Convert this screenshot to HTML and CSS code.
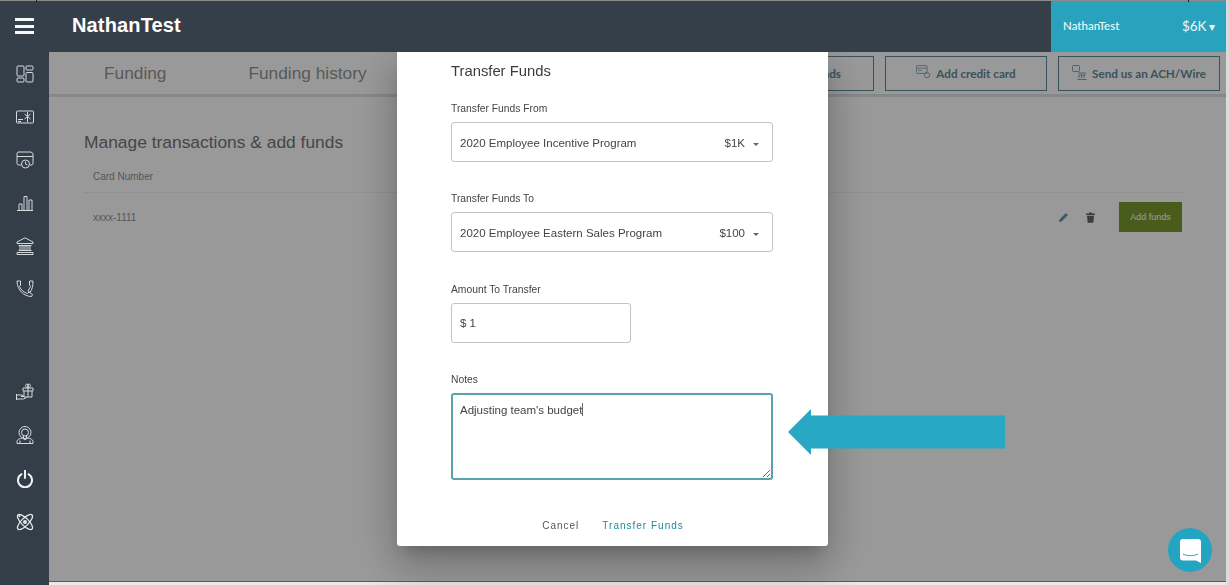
FILE: index.html
```html
<!DOCTYPE html>
<html lang="en">
<head>
<meta charset="utf-8">
<title>Transfer Funds</title>
<link rel="stylesheet" href="styles.css">
</head>
<body>
<div class="app">
  <header class="topbar">
    <div class="burger"><span></span><span></span><span></span></div>
    <h1 class="brand">NathanTest</h1>
    <div class="account"><span class="account-name">NathanTest</span><span class="account-bal">$6K <small>▾</small></span></div>
  </header>
  <div class="body-row">
    <nav class="sidebar">
      <div class="nav-group">
        <a class="nav-item"><svg class="ico" width="18" height="18" viewBox="0 0 18 18"><rect x="1" y="1" width="7" height="10" rx="1"/><rect x="10" y="1" width="7" height="4" rx="1"/><rect x="1" y="13" width="7" height="4" rx="1"/><rect x="10" y="7.5" width="7" height="9.5" rx="1"/></svg></a>
        <a class="nav-item"><svg class="ico" width="18" height="14" viewBox="0 0 18 14"><rect x=".5" y="1" width="17" height="12" rx="1"/><path d="M2 9.5h5M2 11.5h3M11.5 2v10M8.5 4l6 5M14.5 4l-6 5"/></svg></a>
        <a class="nav-item"><svg class="ico" width="18" height="18" viewBox="0 0 18 18"><path d="M5 14H2.500A1.500 1.500 0 0 1 1 12.500V2.500L2 1h13l2 1.500V12.500L16 14h-2M1 5.500h16"/><circle cx="9.500" cy="13" r="4"/><path d="M9.500 10.500V13l2 1"/></svg></a>
        <a class="nav-item"><svg class="ico" width="16" height="16" viewBox="0 0 16 16"><path d="M0 15.500h16M2 15V9h3v6M7 15V1.500h3V15M12 15V5h3v10"/></svg></a>
        <a class="nav-item"><svg class="ico" width="18" height="18" viewBox="0 0 18 18"><path d="M9 .8 17 5v1.500H1V5zM2.500 8.500h13M2.500 13.500h13M1 15.500h16v2H1zM4 8.500v5M6 8.500v5M8 8.500v5M10 8.500v5M12 8.500v5M14 8.500v5"/></svg></a>
        <a class="nav-item"><svg class="ico" width="18" height="17" viewBox="0 0 18 17"><path d="M1 1h3.500v4L3.500 6.500C5 10 8 12.500 11.500 13.500L13 12l3.500 2.500-1 2C8 16.500 1 10 1 1zM17 1h-3.500v4l1 1.500-2.500 4.500 2 1.500C16 10 17 6 17 1z"/></svg></a>
      </div>
      <div class="nav-group nav-lower">
        <a class="nav-item"><svg class="ico" width="18" height="17" viewBox="0 0 18 17"><path d="M7 5h10v3H7zM8 8v6h8V8M12 5v9M12 5c-3-.5-3-4-1-4s1 4 1 4c3-.500 3-4 1-4s-1 4-1 4M.500 11v6M.500 12H6l2 1.500H5M.500 16h7l3-1.500"/></svg></a>
        <a class="nav-item"><svg class="ico" width="18" height="18" viewBox="0 0 18 18"><circle cx="9" cy="6.500" r="6"/><circle cx="9" cy="6.500" r="3.500"/><path d="M1 17.500v-2c0-2 2.500-3 5.500-3.500L9 14l2.500-2c3 .500 5.500 1.500 5.500 3.500v2zM4 17.500v-3M14 17.500v-3M7.500 10v2M10.500 10v2"/></svg></a>
        <a class="nav-item"><svg class="ico ico-bold" width="16" height="18" viewBox="0 0 16 18"><path d="M4.500 4.200a7 7 0 1 0 7 0M8 .500V8"/></svg></a>
        <a class="nav-item"><svg class="ico ico-mid" width="18" height="18" viewBox="0 0 18 18"><ellipse cx="9" cy="9" rx="10" ry="3.700" transform="rotate(45 9 9)"/><ellipse cx="9" cy="9" rx="10" ry="3.700" transform="rotate(-45 9 9)"/><circle class="ico-fill" cx="9" cy="9" r="2"/><circle class="ico-fill" cx="3.500" cy="3" r="1"/></svg></a>
      </div>
    </nav>
    <main class="main">
      <div class="tabbar">
        <div class="tabs"><span class="tab">Funding</span><span class="tab">Funding history</span></div>
        <div class="actions">
          <button class="action action-cut">Transfer funds</button>
          <button class="action"><svg class="action-ico" width="15" height="15" viewBox="0 0 17 17"><rect x=".5" y=".5" width="12" height="9" rx="1"/><path d="M.5 3.500h12M2.500 6h4"/><circle cx="12.500" cy="11.500" r="3"/></svg>Add credit card</button>
          <button class="action"><svg class="action-ico" width="15" height="15" viewBox="0 0 15 15"><rect x=".5" y=".5" width="7" height="6" rx="1"/><path d="M6 8h8M6.500 10h7M7 10v3M9.500 10v3M12 10v3M5.500 14.500h9"/></svg>Send us an ACH/Wire</button>
        </div>
      </div>
      <section class="panel">
        <h2 class="panel-title">Manage transactions &amp; add funds</h2>
        <div class="table-head">Card Number</div>
        <div class="table-row">
          <span class="card-no">xxxx-1111</span>
          <span class="row-actions">
            <svg class="row-ico" width="10" height="10" viewBox="0 0 10 10"><path class="pencil" d="M0 10l.6-2.700L7 1l2 2-6.300 6.400z"/></svg>
            <svg class="row-ico" width="9" height="11" viewBox="0 0 9 11"><path class="trash" d="M0 1.500h3V.5h3v1h3v1.500H0zM1 3.800h7l-.7 7H1.700z"/></svg>
            <button class="add-funds">Add funds</button>
          </span>
        </div>
      </section>
    </main>
  </div>

  <div class="overlay">
    <div class="modal">
      <h3 class="modal-title">Transfer Funds</h3>
      <div class="field">
        <label class="field-label">Transfer Funds From</label>
        <div class="select"><span class="select-name">2020 Employee Incentive Program</span><span class="select-amt">$1K</span><i class="caret"></i></div>
      </div>
      <div class="field">
        <label class="field-label">Transfer Funds To</label>
        <div class="select"><span class="select-name">2020 Employee Eastern Sales Program</span><span class="select-amt">$100</span><i class="caret"></i></div>
      </div>
      <div class="field">
        <label class="field-label">Amount To Transfer</label>
        <div class="amount">$ 1</div>
      </div>
      <div class="field field-notes">
        <label class="field-label">Notes</label>
        <div class="notes">Adjusting team's budget<span class="text-caret"></span></div>
      </div>
      <div class="modal-actions">
        <button class="btn-text">Cancel</button>
        <button class="btn-text btn-primary">Transfer Funds</button>
      </div>
    </div>
  </div>

  <svg class="callout" width="217" height="46" viewBox="0 0 217 46"><path d="M0 23 23 0v6.500h194v33H23V46z"/></svg>

  <div class="chat"><svg width="21" height="24" viewBox="0 0 21 24"><path class="chat-bubble" d="M3 0h15a3 3 0 0 1 3 3v21l-5-2.500H3a3 3 0 0 1-3-3V3a3 3 0 0 1 3-3z"/><path class="chat-smile" d="M3 15c4 2.200 11 2.200 15 0"/></svg></div>
  <i class="tick tick-a"></i><i class="tick tick-b"></i>
</div>
</body>
</html>
```

FILE: styles.css
```css
* { box-sizing: border-box; }
html, body { margin: 0; height: 100%; overflow: hidden; }
body { font-family: "Liberation Sans", Arial, sans-serif; background: #dcdcdc; }
.app { height: 585px; width: 1226px; padding-top: 1px; display: flex; flex-direction: column; background: #e8e8e8; }

.topbar { position: relative; z-index: 3; height: 51px; flex: none; display: flex; align-items: center; background: #353f49; color: #fff; }
.burger { width: 49px; display: flex; flex-direction: column; gap: 3.500px; padding: 0 15px; margin-top: -1px; }
.burger span { display: block; height: 3px; width: 19px; background: #f4f6f7; }
.brand { margin: -2px 0 0 23px; font-size: 20px; font-weight: 700; letter-spacing: .15px; flex: 1; }
.account { width: 175px; height: 100%; display: flex; align-items: center; justify-content: space-between; padding: 0 11px 2px 12px; background: #29a3bd; font-family: Lato, sans-serif; color: #eef8fa; }
.account-name { font-size: 11.500px; font-weight: 500; }
.account-bal { font-size: 13.500px; font-weight: 400; }
.account-bal small { font-size: 12px; margin-left: -1px; }

.body-row { flex: 1; display: flex; min-height: 0; }
.sidebar { position: relative; z-index: 3; width: 49px; flex: none; background: #333e48; }
.nav-group { display: flex; flex-direction: column; }
.nav-lower { margin-top: 60px; }
.nav-item { height: 43px; display: flex; align-items: center; justify-content: center; margin-left: 1px; }
.nav-lower .nav-item { height: 43.500px; }
.ico { fill: none; stroke: #d5dadd; stroke-width: 1; }
.ico-bold { stroke: #eef1f2; stroke-width: 2; stroke-linecap: round; }
.ico-mid { stroke: #e4e7e9; stroke-width: 1.300; }
.ico-fill { fill: #e4e7e9; stroke: none; }

.main { flex: 1; min-width: 0; height: 530px; background: #fff; border-bottom: 1px solid #999; }
.tabbar { height: 45px; display: flex; align-items: flex-start; justify-content: space-between; border-bottom: 3px solid #e2e2e2; }
.tabs { display: flex; gap: 82px; padding: 11px 0 0 55px; }
.tab { font-size: 17.300px; color: #959595; line-height: 21px; }
.actions { display: flex; gap: 11px; padding: 4px 6px 0 0; }
.action { height: 35px; padding: 0 0 2px; border: 1px solid #5f8a99; background: transparent; display: flex; align-items: center; justify-content: center; gap: 5px; width: 162px; font-family: Lato, sans-serif; font-weight: 700; font-size: 11.700px; color: #5f8a99; }
.action-cut { justify-content: flex-end; padding-right: 32px; }
.action-ico { fill: none; stroke: #80a3af; stroke-width: 1; }

.panel { padding: 35px 44px 0 35px; }
.panel-title { margin: 0; font-size: 17.400px; font-weight: 400; color: #757575; line-height: 21px; }
.table-head { height: 40px; padding: 18px 0 0 9px; font-size: 10px; color: #8f8f8f; border-bottom: 1px solid #f1f1f1; line-height: 12px; }
.table-row { height: 47px; padding-top: 1px; display: flex; align-items: center; justify-content: space-between; padding-left: 9px; }
.card-no { font-size: 10px; color: #8f8f8f; }
.row-actions { display: flex; align-items: center; }
.row-ico { margin-right: 17px; }
.row-ico + .row-ico { margin-right: 24px; }
.pencil { fill: #5f9bae; }
.trash { fill: #666; }
.add-funds { width: 63px; height: 30px; padding: 0; border: 0; background: #7a9a30; color: #fff; font-family: "Liberation Sans", sans-serif; font-size: 9px; }

.overlay { position: fixed; top: 0; left: 0; width: 1226px; height: 582px; z-index: 2; background: rgba(0,0,0,.4); padding: 52px 0 0 397px; }
.modal { width: 431px; height: 494px; padding: 12px 54px 0; background: #fff; border-radius: 0 0 3px 3px; box-shadow: 0 11px 15px -7px rgba(0,0,0,.2), 0 24px 38px 3px rgba(0,0,0,.14), 0 9px 46px 8px rgba(0,0,0,.12); color: #444; }
.modal-title { margin: 0 0 23px; height: 15px; font-size: 14.800px; line-height: 15px; font-weight: 400; color: #3c3c3c; }
.field { display: flex; flex-direction: column; height: 90.300px; }
.field-notes { height: auto; }
.field-label { flex: none; padding-top: 1px; font-size: 10.300px; line-height: 12px; height: 20px; color: #444; }
.select { flex: none; width: 322px; height: 40px; padding: 1px 13px 0 8px; display: flex; align-items: center; border: 1px solid #c4c4c4; border-radius: 3px; font-size: 11.500px; color: #444; }
.select-name { flex: 1; }
.select-amt { margin-right: 8px; }
.caret { width: 0; height: 0; margin-top: 3px; border-left: 3.500px solid transparent; border-right: 3.500px solid transparent; border-top: 3.500px solid #666; }
.amount { flex: none; width: 180px; height: 40px; padding: 1px 8px 0; display: flex; align-items: center; border: 1px solid #c4c4c4; border-radius: 3px; font-size: 11.500px; color: #444; }
.notes { flex: none; width: 322px; height: 87px; padding: 8px 7px; border: 2px solid #5aa3ad; border-radius: 3px; font-size: 11.500px; line-height: 14px; color: #444; resize: both; overflow: auto; }
.text-caret { display: inline-block; width: 1px; height: 13px; vertical-align: -2px; background: #666; }
.modal-actions { display: flex; justify-content: center; gap: 23px; margin-top: 40px; padding-left: 1px; }
.btn-text { padding: 0; border: 0; background: none; font-family: "Liberation Sans", sans-serif; font-size: 10px; line-height: 12px; letter-spacing: 1px; color: #555; }
.btn-primary { color: #1d8a9c; }

.callout { position: fixed; left: 788px; top: 409px; z-index: 4; }
.callout path { fill: #29a8c3; }
.chat { position: fixed; left: 1168px; top: 528px; z-index: 4; width: 44px; height: 44px; border-radius: 50%; background: #23a4c0; display: flex; align-items: center; justify-content: center; padding-top: 1px; }
.chat-bubble { fill: #fff; }
.chat-smile { fill: none; stroke: #23a4c0; stroke-width: 1; }
.tick { position: fixed; top: 0; z-index: 5; width: 1px; height: 2px; background: #222; }
.tick-a { left: 36px; }
.tick-b { left: 1188px; }
```
